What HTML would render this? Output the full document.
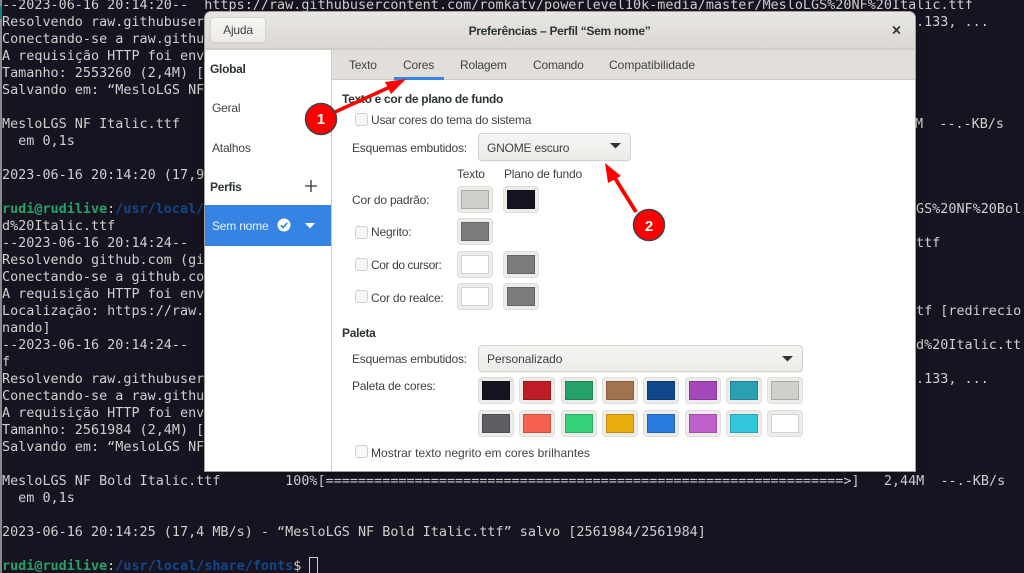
<!DOCTYPE html>
<html lang="pt">
<head>
<meta charset="utf-8">
<title>Preferências</title>
<style>
html,body{margin:0;padding:0;width:1024px;height:573px;overflow:hidden;background:#171421}
#all{position:absolute;left:0;top:0;width:1024px;height:573px;overflow:hidden;filter:blur(.3px)}
#term{position:absolute;left:0;top:0;width:1024px;height:573px;background:#171421;overflow:hidden}
#term pre,.r{margin:0;font:13.44px/17px "DejaVu Sans Mono",monospace;color:#d0cfcc;white-space:pre}
#term pre{position:absolute;left:2px;top:-3.5px}
.r{position:absolute}
.g{color:#26a269;font-weight:bold}
.b{color:#12488b;font-weight:bold}
#edge{position:absolute;left:0;top:0;width:1.5px;height:573px;background:#8a8a8a}
#teal{position:absolute;left:0;top:6px;width:1.5px;height:13px;background:#12807f}
#cursor{position:absolute;left:309px;top:557px;width:9px;height:16px;border:1px solid #d0cfcc;box-sizing:border-box;border-bottom:0}
#dlg{position:absolute;left:205px;top:12px;width:710px;height:459px;background:#fff;border-radius:6px 6px 0 0;overflow:hidden;box-shadow:0 0 0 1px rgba(200,195,190,.8),0 2px 10px rgba(0,0,0,.35);font:12px "Liberation Sans",sans-serif;letter-spacing:-.2px;color:#2e3436}
#dlg div{position:absolute;box-sizing:border-box}
.t{white-space:nowrap;line-height:16px;height:16px;margin-top:1px;color:#3f4244}
.bd{font-weight:bold;color:#2e3436;letter-spacing:-.3px}
#hb{left:0;top:0;width:710px;height:38px;background:linear-gradient(#e8e6e3,#dbd8d3);border-bottom:2px solid #cfcbc5}
.btn{background:linear-gradient(#f6f5f4,#ecebe8);border:1px solid #d6d2cc;border-radius:4px;box-shadow:0 1px 1px rgba(0,0,0,.06)}
#tabs{left:127px;top:38px;width:583px;height:30px;background:#e2dfdb;border-bottom:1px solid #cfcbc5}
#vs{left:126px;top:38px;width:1px;height:421px;background:#cfcac4}
#ul{left:189px;top:65px;width:50px;height:3px;background:#3584e4}
#sel{left:0;top:193px;width:126px;height:41px;background:#3584e4}
.cb{width:13px;height:13px;background:#f8f7f6;border:1px solid #d3cec8;border-radius:3px}
.sw{width:36px;height:27px;background:#eeece9;border:1px solid #e0ddd9;border-radius:4px}
.sw i{position:absolute;left:3px;top:3px;width:28px;height:19px;display:block;border:1px solid rgba(0,0,0,.18);box-sizing:border-box}
svg{position:absolute}
</style>
</head>
<body>
<div id="all">
<div id="term">
<pre>--2023-06-16 20:14:20--  https://raw.githubusercontent.com/romkatv/powerlevel10k-media/master/MesloLGS%20NF%20Italic.ttf
Resolvendo raw.githubusercontent.com
Conectando-se a raw.githubusercontent.com
A requisição HTTP foi enviada
Tamanho: 2553260 (2,4M) [font/ttf]
Salvando em: “MesloLGS NF Italic.ttf”

MesloLGS NF Italic.ttf
  em 0,1s

2023-06-16 20:14:20 (17,9 MB/s)

<span class="g">rudi@rudilive</span>:<span class="b">/usr/local/share/fonts</span>$
d%20Italic.ttf
--2023-06-16 20:14:24--
Resolvendo github.com (github.com)
Conectando-se a github.com
A requisição HTTP foi enviada
Localização: https://raw.githubusercontent.com
nando]
--2023-06-16 20:14:24--
f
Resolvendo raw.githubusercontent.com
Conectando-se a raw.githubusercontent.com
A requisição HTTP foi enviada
Tamanho: 2561984 (2,4M) [font/ttf]
Salvando em: “MesloLGS NF Bold Italic.ttf”

MesloLGS NF Bold Italic.ttf        100%[================================================================&gt;]   2,44M  --.-KB/s
  em 0,1s

2023-06-16 20:14:25 (17,4 MB/s) - “MesloLGS NF Bold Italic.ttf” salvo [2561984/2561984]

<span class="g">rudi@rudilive</span>:<span class="b">/usr/local/share/fonts</span>$</pre>
<div class="r" style="left:916px;top:13.5px">.133, ...</div>
<div class="r" style="left:915px;top:115.5px">M  --.-KB/s</div>
<div class="r" style="left:916px;top:200.5px">GS%20NF%20Bol</div>
<div class="r" style="left:916px;top:234.5px">ttf</div>
<div class="r" style="left:916px;top:302.5px">tf [redirecio</div>
<div class="r" style="left:916px;top:336.5px">d%20Italic.tt</div>
<div class="r" style="left:916px;top:370.5px">.133, ...</div>
<div id="edge"></div><div id="teal"></div>
<div id="cursor"></div>
</div>

<div id="dlg">
<div id="hb"></div>
<div class="btn t" style="left:5px;top:5px;width:56px;height:26px;line-height:25px;margin-top:0;text-align:center">Ajuda</div>
<div class="t bd" style="left:0;width:710px;top:10px;text-align:center;padding-right:1px">Preferências – Perfil “Sem nome”</div>
<svg style="left:687px;top:13px" width="9" height="10" viewBox="0 0 9 10"><path d="M1.2 1.5L7.8 8.5M7.8 1.5L1.2 8.5" stroke="#2e3436" stroke-width="1.7"/></svg>

<div id="tabs"></div><div id="vs"></div><div id="ul"></div>
<div class="t" style="left:144px;top:44px">Texto</div>
<div class="t" style="left:198px;top:44px">Cores</div>
<div class="t" style="left:255px;top:44px">Rolagem</div>
<div class="t" style="left:328px;top:44px">Comando</div>
<div class="t" style="left:404px;top:44px;letter-spacing:0">Compatibilidade</div>

<div class="t bd" style="left:5px;top:48px">Global</div>
<div class="t" style="left:7px;top:87px">Geral</div>
<div class="t" style="left:7px;top:127px">Atalhos</div>
<div class="t bd" style="left:5px;top:166px">Perfis</div>
<svg style="left:100px;top:168px" width="12" height="12" viewBox="0 0 12 12"><path d="M6 0V12M0 6H12" stroke="#2e3436" stroke-width="1.3"/></svg>
<div id="sel"></div>
<div class="t" style="left:7px;top:205px;color:#e8f1fc">Sem nome</div>
<svg style="left:72px;top:206px" width="14" height="14" viewBox="0 0 14 14"><circle cx="7" cy="7" r="6.5" fill="#fff"/><path d="M3.8 7.2L6.2 9.6L10.2 4.8" fill="none" stroke="#3584e4" stroke-width="1.7"/></svg>
<svg style="left:99px;top:211px" width="12" height="6" viewBox="0 0 12 6"><path d="M1 0H11L6 5.5Z" fill="#fff"/></svg>

<div class="t bd" style="left:137px;top:78px">Texto e cor de plano de fundo</div>
<div class="cb" style="left:150px;top:101px"></div>
<div class="t" style="left:166px;top:99px">Usar cores do tema do sistema</div>
<div class="t" style="left:147px;top:127px">Esquemas embutidos:</div>
<div class="btn" style="left:273px;top:121px;width:153px;height:28px"></div>
<div class="t" style="left:282px;top:127px">GNOME escuro</div>
<svg style="left:405px;top:131px" width="11" height="6" viewBox="0 0 11 6"><path d="M0 0H11L5.5 5.5Z" fill="#2e3436"/></svg>
<div class="t" style="left:252px;top:153px">Texto</div>
<div class="t" style="left:299px;top:153px">Plano de fundo</div>

<div class="t" style="left:147px;top:179px">Cor do padrão:</div>
<div class="sw" style="left:252px;top:174px"><i style="background:#d0cfcc"></i></div>
<div class="sw" style="left:298px;top:174px"><i style="background:#171421"></i></div>
<div class="cb" style="left:150px;top:214px"></div>
<div class="t" style="left:166px;top:211px">Negrito:</div>
<div class="sw" style="left:252px;top:206px"><i style="background:#7c7c7c"></i></div>
<div class="cb" style="left:150px;top:246px"></div>
<div class="t" style="left:166px;top:244px;letter-spacing:-.4px">Cor do cursor:</div>
<div class="sw" style="left:252px;top:239px"><i style="background:#fff"></i></div>
<div class="sw" style="left:298px;top:239px"><i style="background:#7c7c7c"></i></div>
<div class="cb" style="left:150px;top:278px"></div>
<div class="t" style="left:166px;top:277px">Cor do realce:</div>
<div class="sw" style="left:252px;top:271px"><i style="background:#fff"></i></div>
<div class="sw" style="left:298px;top:271px"><i style="background:#7c7c7c"></i></div>

<div class="t bd" style="left:137px;top:312px">Paleta</div>
<div class="t" style="left:147px;top:338px">Esquemas embutidos:</div>
<div class="btn" style="left:273px;top:333px;width:325px;height:27px"></div>
<div class="t" style="left:282px;top:338px;letter-spacing:-.05px">Personalizado</div>
<svg style="left:577px;top:344px" width="11" height="6" viewBox="0 0 11 6"><path d="M0 0H11L5.5 5.5Z" fill="#2e3436"/></svg>
<div class="t" style="left:147px;top:365px">Paleta de cores:</div>

<div class="sw" style="left:273px;top:365px"><i style="background:#171421"></i></div>
<div class="sw" style="left:314px;top:365px"><i style="background:#c01c28"></i></div>
<div class="sw" style="left:356px;top:365px"><i style="background:#26a269"></i></div>
<div class="sw" style="left:397px;top:365px"><i style="background:#a2734c"></i></div>
<div class="sw" style="left:438px;top:365px"><i style="background:#12488b"></i></div>
<div class="sw" style="left:480px;top:365px"><i style="background:#a347ba"></i></div>
<div class="sw" style="left:521px;top:365px"><i style="background:#2aa1b3"></i></div>
<div class="sw" style="left:562px;top:365px"><i style="background:#d0cfcc"></i></div>
<div class="sw" style="left:273px;top:398px"><i style="background:#5e5c64"></i></div>
<div class="sw" style="left:314px;top:398px"><i style="background:#f66151"></i></div>
<div class="sw" style="left:356px;top:398px"><i style="background:#33d17a"></i></div>
<div class="sw" style="left:397px;top:398px"><i style="background:#e9ad0c"></i></div>
<div class="sw" style="left:438px;top:398px"><i style="background:#2a7bde"></i></div>
<div class="sw" style="left:480px;top:398px"><i style="background:#c061cb"></i></div>
<div class="sw" style="left:521px;top:398px"><i style="background:#33c7de"></i></div>
<div class="sw" style="left:562px;top:398px"><i style="background:#fff"></i></div>

<div class="cb" style="left:150px;top:433px"></div>
<div class="t" style="left:166px;top:432px;letter-spacing:.02px">Mostrar texto negrito em cores brilhantes</div>
</div>

<svg style="left:0;top:0" width="1024" height="573" viewBox="0 0 1024 573">
<path d="M335 112L390 87" stroke="#f00" stroke-width="3.5" fill="none"/>
<path d="M406 79L385 82L391 94Z" fill="#f00"/>
<path d="M636 212L613 175" stroke="#f00" stroke-width="3.8" fill="none"/>
<path d="M605 163L608 183L621 176Z" fill="#f00"/>
<circle cx="321" cy="119" r="15.5" fill="#f00" stroke="#444" stroke-width="1.5"/>
<circle cx="649" cy="225" r="15.5" fill="#f00" stroke="#444" stroke-width="1.5"/>
<text x="321" y="124" text-anchor="middle" font-family="Liberation Sans, sans-serif" font-weight="bold" font-size="15" fill="#fff">1</text>
<text x="649" y="231" text-anchor="middle" font-family="Liberation Sans, sans-serif" font-weight="bold" font-size="15" fill="#fff">2</text>
</svg>
</div>
</body>
</html>
